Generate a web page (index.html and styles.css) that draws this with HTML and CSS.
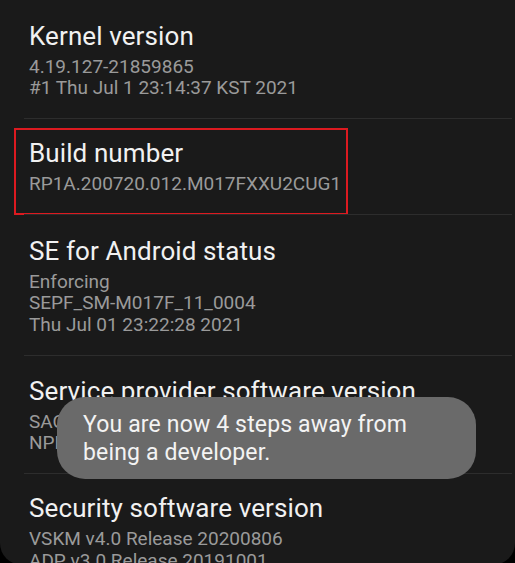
FILE: index.html
```html
<!DOCTYPE html>
<html lang="en">
<head>
<meta charset="utf-8">
<title>Software information</title>
<link rel="stylesheet" href="styles.css">
</head>
<body>
<div class="card">
  <ul class="list">
    <li class="item first">
      <div class="title">Kernel version</div>
      <div class="sub">4.19.127-21859865<br>#1 Thu Jul 1 23:14:37 KST 2021</div>
    </li>
    <li class="item highlighted">
      <div class="title">Build number</div>
      <div class="sub">RP1A.200720.012.M017FXXU2CUG1</div>
      <div class="highlight"></div>
    </li>
    <li class="item tall">
      <div class="title">SE for Android status</div>
      <div class="sub">Enforcing<br>SEPF_SM-M017F_11_0004<br>Thu Jul 01 23:22:28 2021</div>
    </li>
    <li class="item">
      <div class="title">Service provider software version</div>
      <div class="sub">SAOMC_SM-M017F_OXM_NPL_RR_0013<br>NPL/NPL/NPL</div>
    </li>
    <li class="item">
      <div class="title">Security software version</div>
      <div class="sub">VSKM v4.0 Release 20200806<br>ADP v3.0 Release 20191001</div>
    </li>
  </ul>
  <div class="toast">You are now 4 steps away from<br>being a developer.</div>
</div>
</body>
</html>
```
FILE: styles.css
```css
html, body {
  margin: 0;
  padding: 0;
  background: #000;
  overflow: hidden;
}
body {
  font-family: Roboto, "Noto Sans", "Liberation Sans", sans-serif;
}
.card {
  position: relative;
  width: 515px;
  height: 565px;
  background: #1a1a1a;
  border-radius: 0 0 22px 22px;
  overflow: hidden;
}
.list {
  list-style: none;
  margin: 0;
  padding: 0 3px 0 24px;
}
.item {
  position: relative;
  border-top: 1px solid #2d2d2d;
  padding: 17.5px 0 19px 5px;
}
.item.first {
  border-top-color: transparent;
}
.item.tall {
  padding-top: 19px;
  padding-bottom: 20px;
}
.title {
  font-size: 26px;
  line-height: 34px;
  color: #f1f1f1;
  letter-spacing: 0.1px;
  white-space: nowrap;
}
.sub {
  margin-top: 3px;
  font-size: 19px;
  line-height: 21.5px;
  color: #9a9a9a;
  white-space: nowrap;
}
.highlight {
  position: absolute;
  left: -10px;
  top: 9px;
  width: 334px;
  height: 87px;
  box-sizing: border-box;
  border: 2.7px solid #dc1a20;
}
.toast {
  position: absolute;
  left: 57px;
  top: 397px;
  width: 419px;
  height: 82px;
  box-sizing: border-box;
  padding: 14px 26px 0 26px;
  background: #6a6a6a;
  border-radius: 28px;
  color: #f3f3f3;
  font-size: 23px;
  line-height: 27.7px;
  letter-spacing: 0.15px;
}
```
